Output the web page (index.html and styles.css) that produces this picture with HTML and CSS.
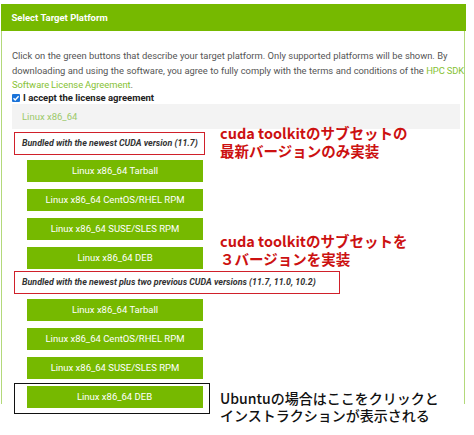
FILE: index.html
```html
<!DOCTYPE html>
<html lang="ja">
<head>
<meta charset="utf-8">
<link rel="stylesheet" href="styles.css">
</head>
<body>
<div class="panel">
  <div class="header">Select Target Platform</div>
  <div class="body">
    <p class="intro">Click on the green buttons that describe your target platform. Only supported platforms will be shown. By downloading and using the software, you agree to fully comply with the terms and conditions of the <span class="link">HPC SDK Software License Agreement</span>.</p>
    <div class="accept"><span class="check"><svg viewBox="0 0 8 8" width="8" height="8"><path d="M1.5 4.2 L3.2 5.9 L6.6 2.2" fill="none" stroke="#fff" stroke-width="1.4"/></svg></span><span>I accept the license agreement</span></div>
    <div class="platform">Linux x86_64</div>
    <div class="group">
      <div class="bundle red">Bundled with the newest CUDA version (11.7)</div>
      <div class="buttons">
        <div class="btn">Linux x86_64 Tarball</div>
        <div class="btn">Linux x86_64 CentOS/RHEL RPM</div>
        <div class="btn">Linux x86_64 SUSE/SLES RPM</div>
        <div class="btn">Linux x86_64 DEB</div>
      </div>
      <div class="bundle red wide">Bundled with the newest plus two previous CUDA versions (11.7, 11.0, 10.2)</div>
      <div class="buttons">
        <div class="btn">Linux x86_64 Tarball</div>
        <div class="btn">Linux x86_64 CentOS/RHEL RPM</div>
        <div class="btn">Linux x86_64 SUSE/SLES RPM</div>
        <div class="boxed"><div class="btn">Linux x86_64 DEB</div></div>
      </div>
    </div>
  </div>
</div>
<div class="note note-red note1">cuda toolkitのサブセットの<br>最新バージョンのみ実装</div>
<div class="note note-red note2">cuda toolkitのサブセットを<br>３バージョンを実装</div>
<div class="note note-black note3">Ubuntuの場合はここをクリックと<br>インストラクションが表示される</div>
</body>
</html>
```
FILE: styles.css
```css
html, body {
  margin: 0;
  padding: 0;
  background: #ffffff;
}
body {
  width: 474px;
  height: 435px;
  overflow: hidden;
  position: relative;
  font-family: Roboto, "Liberation Sans", sans-serif;
}
.panel {
  margin: 4px 0 0 1px;
  width: 464px;
  height: 400px;
  box-sizing: border-box;
  border-left: 1.5px solid #b3d97a;
  border-right: 1.5px solid #b3d97a;
}
.header {
  margin: 0 -1.5px;
  background: #76b900;
  height: 27px;
  line-height: 27px;
  padding-left: 11px;
  color: #ffffff;
  font-weight: 700;
  font-size: 9.5px;
}
.body {
  padding: 18px 0 0 10px;
}
.intro {
  margin: 0 -5px 0 0;
  font-size: 9.4px;
  line-height: 14.5px;
  word-spacing: 0.2px;
  letter-spacing: -0.03px;
  color: #555555;
}
.link {
  color: #86c232;
  word-spacing: -0.4px;
}
.accept {
  display: flex;
  align-items: center;
  margin-top: 0;
  height: 10px;
  font-size: 9.5px;
  font-weight: 700;
  color: #222222;
}
.check {
  width: 8px;
  height: 8px;
  background: #1a73d9;
  border-radius: 1px;
  margin-right: 3px;
  display: flex;
}
.platform {
  margin-top: 1px;
  width: 448px;
  height: 25px;
  line-height: 25px;
  box-sizing: border-box;
  padding-left: 10px;
  background: #f3f3f3;
  color: #9cc96a;
  font-size: 9.5px;
}
.group {
  padding-left: 2px;
}
.bundle {
  margin-top: 3px;
  height: 23px;
  line-height: 20px;
  box-sizing: border-box;
  padding-left: 7px;
  font-size: 8.9px;
  font-style: italic;
  font-weight: 700;
  color: #333333;
}
.red {
  width: 191px;
  border: 1.5px solid #d0202a;
}
.red.wide {
  width: 326px;
  margin-top: 2px;
}
.buttons {
  display: flex;
  flex-direction: column;
  gap: 7px;
  padding-top: 5px;
}
.btn {
  margin-left: 13px;
  width: 176px;
  height: 22px;
  line-height: 22px;
  background: #76b900;
  color: #ffffff;
  text-align: center;
  font-size: 9.5px;
}
.boxed {
  width: 196px;
  height: 31px;
  box-sizing: border-box;
  border: 1.5px solid #111111;
  padding-top: 2.5px;
  margin-top: -3px;
}
.boxed .btn {
  margin-left: 11.5px;
}
.note {
  position: absolute;
  left: 220px;
  font-family: "Noto Sans CJK JP", sans-serif;
  font-size: 14.5px;
  line-height: 18px;
  white-space: nowrap;
}
.note-red {
  color: #cc1111;
  font-weight: 700;
}
.note-black {
  color: #111111;
  font-weight: 500;
  font-size: 14px;
  line-height: 17px;
}
.note1 { top: 124px; }
.note2 { top: 232px; }
.note3 { top: 390px; }
```
